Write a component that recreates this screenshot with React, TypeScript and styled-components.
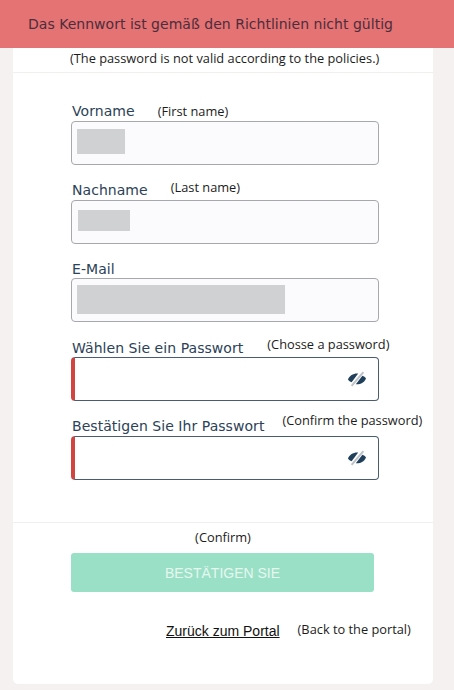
import React from "react";
import styled, { createGlobalStyle } from "styled-components";

const Global = createGlobalStyle`
  html, body { margin: 0; padding: 0; background: #f5f1f0; }
  * { box-sizing: border-box; }
`;

const Page = styled.div`
  width: 454px;
  height: 690px;
  overflow: hidden;
  display: flex;
  flex-direction: column;
`;

const Banner = styled.div`
  height: 48px;
  flex: none;
  background: #e57373;
  color: #4b2d3c;
  font: 14px/48px "DejaVu Sans", sans-serif;
  letter-spacing: 0.02px;
  padding-left: 28px;
`;

const Card = styled.main`
  width: 420px;
  height: 636px;
  margin-left: 13px;
  background: #fff;
  border-radius: 0 0 5px 5px;
  display: flex;
  flex-direction: column;
`;

const Note = styled.span`
  font: 12.8px/16px "Open Sans", sans-serif;
  color: #1c1c1c;
  white-space: nowrap;
`;

const PolicyNote = styled(Note)`
  display: block;
  height: 25px;
  padding: 2px 0 0 57px;
  border-bottom: 1px solid #f3efee;
`;

const Form = styled.form`
  height: 450px;
  padding-left: 58px;
  padding-top: 24px;
  border-bottom: 1px solid #f3efee;
  display: flex;
  flex-direction: column;
`;

const Field = styled.div<{ $gap: number }>`
  margin-bottom: ${(p) => p.$gap}px;
`;

const LabelRow = styled.div<{ $noteGap: number; $noteTop: number; $labelTop: number }>`
  height: 24px;
  display: flex;
  align-items: flex-start;
  gap: ${(p) => p.$noteGap}px;
  ${Note} { margin-top: ${(p) => p.$noteTop}px; }
  label { margin-top: ${(p) => p.$labelTop}px; }
`;

const Label = styled.label`
  font: 14px/18px "DejaVu Sans", sans-serif;
  letter-spacing: 0.05px;
  color: #2b4257;
  padding-left: 1px;
  white-space: nowrap;
`;

const Box = styled.div<{ $error?: boolean }>`
  width: 308px;
  height: 44px;
  border-radius: 4px;
  display: flex;
  align-items: center;
  justify-content: space-between;
  padding: 0 11px 0 5px;
  background: ${(p) => (p.$error ? "#fff" : "#fbfbfd")};
  border: 1px solid ${(p) => (p.$error ? "#4a5d70" : "#a6a8ab")};
  ${(p) => p.$error && "border-left: 4px solid #d2443f;"}
`;

const Redacted = styled.div<{ $w: number; $h: number; $shift: number; $inset?: number }>`
  width: ${(p) => p.$w}px;
  height: ${(p) => p.$h}px;
  margin-top: ${(p) => p.$shift}px;
  margin-left: ${(p) => p.$inset ?? 0}px;
  background: #d0d1d3;
`;

const EyeSvg = styled.svg`
  width: 20px;
  height: 16px;
  margin-left: auto;
  flex: none;
`;

const ConfirmNote = styled(Note)`
  display: block;
  text-align: center;
  height: 30px;
  line-height: 28px;
`;

const Button = styled.button`
  display: block;
  width: 303px;
  height: 39px;
  margin-left: 58px;
  border: 0;
  border-radius: 3px;
  background: #9ae0c6;
  color: #e6f7f0;
  font: 14px "Liberation Sans", Arial, sans-serif;
  padding: 0;
`;

const LinkRow = styled.div`
  margin-top: 28px;
  padding-left: 153px;
  display: flex;
  align-items: flex-start;
  gap: 18px;
  ${Note} { margin-top: 1px; }
`;

const BackLink = styled.a`
  font: 14px/22px "Liberation Sans", Arial, sans-serif;
  color: #111;
  text-decoration: underline;
`;

const Eye = () => (
  <EyeSvg viewBox="0 0 20 16" aria-hidden="true">
    <path d="M1 8.4C2.6 4.4 6.5 2.2 11.2 2.6L4.6 11.2C3.1 10.7 1.9 9.8 1 8.4Z" fill="#1f3f5b" />
    <path d="M19 7.4C17.4 11.4 13.4 13.6 8.8 13.2L15.4 4.8C16.9 5.3 18.1 6 19 7.4Z" fill="#1f3f5b" />
    <path d="M4.6 14.8L16.4 1.2" stroke="#bcc2c8" strokeWidth="2" />
  </EyeSvg>
);

export default function App() {
  return (
    <Page>
      <Global />
      <Banner>Das Kennwort ist gemäß den Richtlinien nicht gültig</Banner>
      <Card>
        <PolicyNote>(The password is not valid according to the policies.)</PolicyNote>
        <Form>
          <Field $gap={11}>
            <LabelRow $noteGap={23} $noteTop={6} $labelTop={5}>
              <Label>Vorname</Label>
              <Note>(First name)</Note>
            </LabelRow>
            <Box>
              <Redacted $w={48} $h={25} $shift={-3} />
            </Box>
          </Field>
          <Field $gap={10}>
            <LabelRow $noteGap={23} $noteTop={3} $labelTop={5}>
              <Label>Nachname</Label>
              <Note>(Last name)</Note>
            </LabelRow>
            <Box>
              <Redacted $w={52} $h={21} $shift={-3} $inset={1} />
            </Box>
          </Field>
          <Field $gap={11}>
            <LabelRow $noteGap={0} $noteTop={0} $labelTop={6}>
              <Label>E-Mail</Label>
            </LabelRow>
            <Box>
              <Redacted $w={208} $h={29} $shift={-1} />
            </Box>
          </Field>
          <Field $gap={11}>
            <LabelRow $noteGap={24} $noteTop={3} $labelTop={6}>
              <Label>Wählen Sie ein Passwort</Label>
              <Note>(Chosse a password)</Note>
            </LabelRow>
            <Box $error>
              <Eye />
            </Box>
          </Field>
          <Field $gap={0}>
            <LabelRow $noteGap={18} $noteTop={0} $labelTop={5}>
              <Label>Bestätigen Sie Ihr Passwort</Label>
              <Note>(Confirm the password)</Note>
            </LabelRow>
            <Box $error>
              <Eye />
            </Box>
          </Field>
        </Form>
        <ConfirmNote>(Confirm)</ConfirmNote>
        <Button type="button">BESTÄTIGEN SIE</Button>
        <LinkRow>
          <BackLink href="#">Zurück zum Portal</BackLink>
          <Note>(Back to the portal)</Note>
        </LinkRow>
      </Card>
    </Page>
  );
}
